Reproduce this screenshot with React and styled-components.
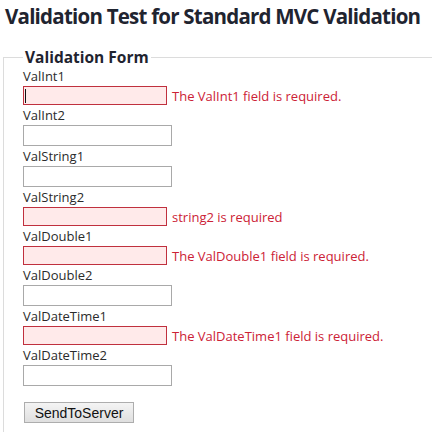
import React from 'react'
import styled, { createGlobalStyle } from 'styled-components'

const fields = [
    { name: 'ValInt1', error: 'The ValInt1 field is required.', focused: true },
    { name: 'ValInt2' },
    { name: 'ValString1' },
    { name: 'ValString2', error: 'string2 is required' },
    { name: 'ValDouble1', error: 'The ValDouble1 field is required.' },
    { name: 'ValDouble2' },
    { name: 'ValDateTime1', error: 'The ValDateTime1 field is required.' },
    { name: 'ValDateTime2' },
]

const GlobalStyle = createGlobalStyle`
    body {
        margin: 0;
        background: #fff;
        font-family: "Open Sans", "Noto Sans", sans-serif;
        color: #2b2b2b;
        overflow: hidden;
    }
`

const App = () => (
    <Page>
        <GlobalStyle />
        <Title>Validation Test for Standard MVC Validation</Title>
        <Fieldset>
            <Legend>Validation Form</Legend>
            {fields.map(f => (
                <Field key={f.name}>
                    <Label htmlFor={f.name}>{f.name}</Label>
                    <Row>
                        <InputWrap>
                            <Input id={f.name} type="text" invalid={!!f.error} />
                            {f.focused && <Caret />}
                        </InputWrap>
                        {f.error && <Error>{f.error}</Error>}
                    </Row>
                </Field>
            ))}
            <Button type="button">SendToServer</Button>
        </Fieldset>
    </Page>
)

const Page = styled.div`
    width: 432px;
    height: 432px;
    overflow: hidden;
`

const Title = styled.h1`
    margin: 0 0 16px;
    padding-left: 5px;
    font-size: 20.5px;
    letter-spacing: -0.78px;
    line-height: 32px;
    font-weight: 700;
    color: #1f2430;
    white-space: nowrap;
`

const Fieldset = styled.fieldset`
    margin: 0 0 0 3px;
    padding: 0 0 20px 19px;
    width: 520px;
    border: 1px solid #dcdcdc;
`

const Legend = styled.legend`
    padding: 0 2px;
    font-size: 15.5px;
    line-height: 18px;
    font-weight: 700;
    color: #1f2430;
`

const Field = styled.div`
    display: flex;
    flex-direction: column;
    align-items: flex-start;
`

const Label = styled.label`
    display: block;
    font-size: 13px;
    line-height: 20px;
    height: 20px;
`

const Row = styled.div`
    display: flex;
    align-items: center;
`

const InputWrap = styled.div`
    position: relative;
    display: flex;
`

const Input = styled.input.withConfig({ shouldForwardProp: p => p !== 'invalid' })`
    box-sizing: border-box;
    margin: 0;
    padding: 0 2px;
    width: ${p => (p.invalid ? '144px' : '149px')};
    height: ${p => (p.invalid ? '19px' : '21px')};
    border: 1px solid ${p => (p.invalid ? '#c0303e' : '#a9a9a9')};
    background: ${p => (p.invalid ? '#ffeaea' : '#fff')};
    outline: none;
    font: 13px "Open Sans", sans-serif;
`

const Caret = styled.span`
    position: absolute;
    left: 2px;
    top: 3px;
    width: 1px;
    height: 14px;
    background: #111;
`

const Error = styled.span`
    margin-left: 5px;
    font-size: 13px;
    line-height: 16px;
    color: #cc2236;
    white-space: nowrap;
`

const Button = styled.button`
    margin-top: 16px;
    margin-left: 1px;
    height: 21px;
    width: 110px;
    padding: 0;
    border: 1px solid #adadad;
    background: linear-gradient(#f4f4f4, #dfdfdf);
    font: 14px "Liberation Sans", Arial, sans-serif;
    color: #111;
`

export default App
